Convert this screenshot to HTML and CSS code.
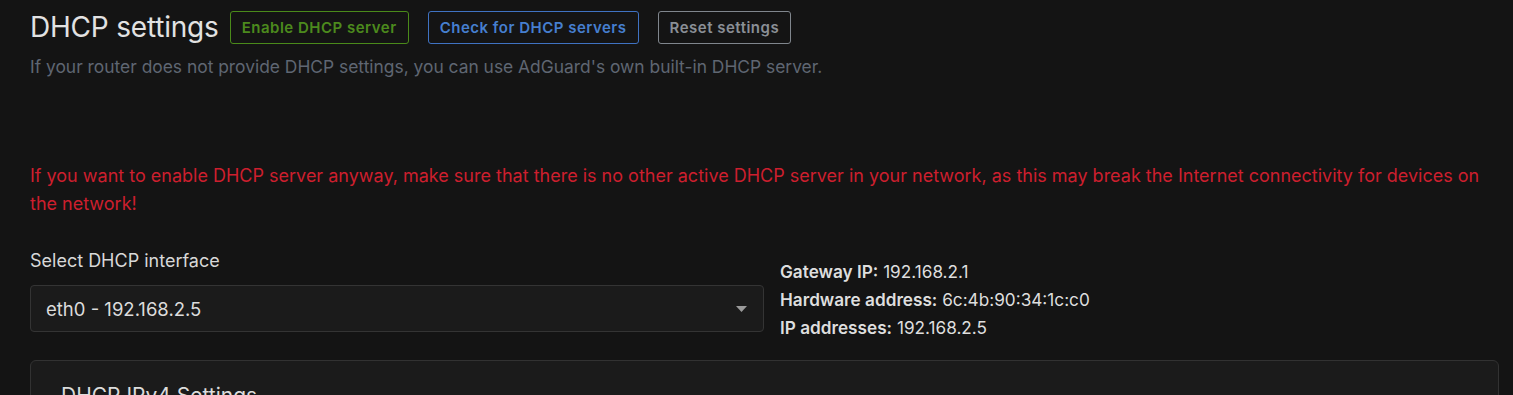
FILE: index.html
```html
<!DOCTYPE html>
<html lang="en">
<head>
  <meta charset="UTF-8" />
  <title>DHCP settings</title>
  <link rel="stylesheet" href="styles.css">
</head>
<body>
  <div class="page">
    <div class="page-header">
      <h1>DHCP settings</h1>
      <button class="btn btn-green">Enable DHCP server</button>
      <button class="btn btn-blue">Check for DHCP servers</button>
      <button class="btn btn-gray">Reset settings</button>
    </div>
    <p class="subtitle">If your router does not provide DHCP settings, you can use AdGuard's own built-in DHCP server.</p>

    <p class="warning">If you want to enable DHCP server anyway, make sure that there is no other active DHCP server in your network, as this may break the Internet connectivity for devices on the network!</p>

    <div class="iface-row">
      <div class="iface-select">
        <label>Select DHCP interface</label>
        <div class="select">
          <span>eth0 - 192.168.2.5</span>
          <svg width="11" height="6" viewBox="0 0 11 6"><path d="M0 0 L11 0 L5.5 6 Z" fill="#9a9a9a"/></svg>
        </div>
      </div>
      <div class="iface-info">
        <div><b>Gateway IP:</b> 192.168.2.1</div>
        <div><b>Hardware address:</b> 6c:4b:90:34:1c:c0</div>
        <div><b>IP addresses:</b> 192.168.2.5</div>
      </div>
    </div>

    <div class="card">
      <h3>DHCP IPv4 Settings</h3>
    </div>
  </div>
</body>
</html>
```

FILE: styles.css
```css
:root {
  --bg: #141414;
  --text: #dcdcdc;
  --muted: #5f6672;
  --green: #4c8a1d;
  --blue: #467fcf;
  --gray: #8a8f96;
  --red: #cd1f2e;
  --border: #343434;
}
* { box-sizing: border-box; margin: 0; padding: 0; }
html, body { background: var(--bg); }
body {
  font-family: 'Inter', 'Noto Sans', sans-serif;
  color: var(--text);
  overflow: hidden;
}
.page {
  padding: 10px 14px 0 30px;
}
.page-header {
  display: flex;
  align-items: center;
}
.page-header h1 {
  font-size: 28px;
  font-weight: 400;
  color: #e2e2e2;
  margin-right: 11px;
  letter-spacing: -0.2px;
}
.btn {
  font-family: inherit;
  background: transparent;
  font-size: 15px;
  font-weight: 600;
  letter-spacing: 0.5px;
  height: 33px;
  padding: 0 11px;
  border-radius: 3px;
  border: 1px solid;
  margin-right: 19px;
}
.btn-green { color: var(--green); border-color: #4a8a1a; }
.btn-blue { color: var(--blue); border-color: #3f72c2; }
.btn-gray { color: var(--gray); border-color: #80868d; }
.subtitle {
  margin-top: 11px;
  font-size: 17.4px;
  line-height: 24px;
  color: var(--muted);
}
.warning {
  margin-top: 83px;
  font-size: 18px;
  line-height: 28px;
  color: var(--red);
}
.iface-row {
  display: grid;
  grid-template-columns: 734px 1fr;
  column-gap: 16px;
  margin-top: 31px;
}
.iface-select label {
  display: block;
  font-size: 18px;
  line-height: 24px;
  color: #d8d8d8;
  margin-bottom: 12px;
}
.select {
  height: 47px;
  background: #1b1b1b;
  border: 1px solid var(--border);
  border-radius: 4px;
  display: flex;
  align-items: center;
  justify-content: space-between;
  padding: 0 16px 0 15px;
  font-size: 18.5px;
  color: #dcdcdc;
}
.iface-info {
  margin-top: 9px;
  font-size: 17.2px;
  line-height: 28px;
  color: #dedede;
}
.iface-info b {
  font-weight: 600;
}
.card {
  margin-top: 18px;
  width: 1469px;
  background: #1b1b1b;
  border: 1px solid #323232;
  border-radius: 6px;
  padding: 22px 30px;
  height: 120px;
}
.card h3 {
  font-size: 21px;
  font-weight: 400;
  color: #dcdcdc;
}
```
